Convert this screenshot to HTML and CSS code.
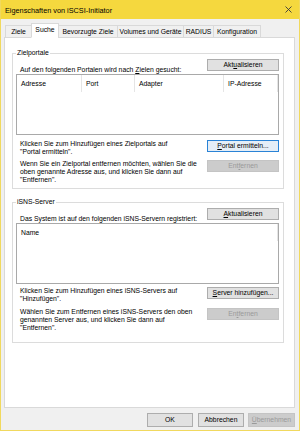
FILE: index.html
```html
<!DOCTYPE html>
<html lang="de">
<head>
<meta charset="utf-8">
<title>Eigenschaften von iSCSI-Initiator</title>
<link rel="stylesheet" href="styles.css">
</head>
<body>
<div class="window">
  <div class="titlebar">
    <span class="title">Eigenschaften von iSCSI-Initiator</span>
    <svg class="close" width="7" height="7" viewBox="0 0 7 7"><path d="M0.5 0.5 L6.5 6.5 M6.5 0.5 L0.5 6.5" stroke="#3a3a3a" stroke-width="0.9" fill="none"/></svg>
  </div>
  <div class="content">
    <div class="tabs">
      <div class="tab-gap"></div>
      <div class="tab t-ziele">Ziele</div>
      <div class="tab tab-active t-suche">Suche</div>
      <div class="tab t-bev">Bevorzugte Ziele</div>
      <div class="tab t-vol">Volumes und Geräte</div>
      <div class="tab t-rad">RADIUS</div>
      <div class="tab t-konf">Konfiguration</div>
      <div class="tab-fill"></div>
    </div>
    <div class="panel">
      <div class="group">
        <div class="group-label">Zielportale</div>
        <div class="row-head">
          <span class="text">Auf den folgenden Portalen wird nach <u>Z</u>ielen gesucht:</span>
          <div class="btn">Akt<u>u</u>alisieren</div>
        </div>
        <div class="list">
          <div class="list-head">
            <div class="col c-adr">Adresse</div>
            <div class="col c-port">Port</div>
            <div class="col c-adapter">Adapter</div>
            <div class="col c-ip">IP-Adresse</div>
          </div>
        </div>
        <div class="row row-b1">
          <div class="text">Klicken Sie zum Hinzufügen eines Zielportals auf<br>"Portal ermitteln".</div>
          <div class="btn btn-default"><u>P</u>ortal ermitteln...</div>
        </div>
        <div class="row row-c1">
          <div class="text">Wenn Sie ein Zielportal entfernen möchten, wählen Sie die<br>oben genannte Adresse aus, und klicken Sie dann auf<br>"Entfernen".</div>
          <div class="btn btn-disabled">Ent<u>f</u>ernen</div>
        </div>
      </div>
      <div class="group group-isns">
        <div class="group-label">iSNS-Server</div>
        <div class="row-head">
          <span class="text">Das System ist auf den folgenden iSNS-Servern registriert:</span>
          <div class="btn"><u>A</u>ktualisieren</div>
        </div>
        <div class="list">
          <div class="list-head">
            <div class="col c-name">Name</div>
          </div>
        </div>
        <div class="row row-b2">
          <div class="text">Klicken Sie zum Hinzufügen eines iSNS-Servers auf<br>"Hinzufügen".</div>
          <div class="btn"><u>S</u>erver hinzufügen...</div>
        </div>
        <div class="row row-c2">
          <div class="text">Wählen Sie zum Entfernen eines iSNS-Servers den oben<br>genannten Server aus, und klicken Sie dann auf<br>"Entfernen".</div>
          <div class="btn btn-disabled">En<u>t</u>fernen</div>
        </div>
      </div>
    </div>
    <div class="footer">
      <div class="btn fbtn f-ok">OK</div>
      <div class="btn fbtn f-cancel">Abbrechen</div>
      <div class="btn fbtn btn-disabled f-apply"><u>Ü</u>bernehmen</div>
    </div>
  </div>
</div>
</body>
</html>
```

FILE: styles.css
```css
html, body {
  margin: 0;
  padding: 0;
  background: #f0f0f0;
}

body {
  font-family: "Liberation Sans", Arial, sans-serif;
  font-size: 6.8px;
  line-height: 8px;
  color: #000;
}

.window {
  width: 300px;
  height: 431px;
  box-sizing: border-box;
  border: 1px solid #f1d95e;
  border-top: none;
  display: flex;
  flex-direction: column;
  background: #f0f0f0;
}

.titlebar {
  height: 19px;
  flex: none;
  background: #f5d83e;
  display: flex;
  align-items: center;
  justify-content: space-between;
  padding-left: 4px;
  padding-right: 7px;
}

.title {
  font-size: 7.3px;
  line-height: 9px;
  margin-top: 1px;
}

.close {
  display: block;
  margin-top: -1px;
}

.content {
  flex: 1;
  display: flex;
  flex-direction: column;
  padding: 4px 4px 0 3px;
  min-height: 0;
}

.tabs {
  display: flex;
  align-items: flex-end;
  height: 15px;
  flex: none;
}

.tab-gap {
  width: 1px;
  height: 1px;
  background: #d9d9d9;
}

.tab-fill {
  flex: 1;
  height: 1px;
  background: #d9d9d9;
  margin-left: -1px;
}

.tab {
  box-sizing: border-box;
  height: 13px;
  border: 1px solid #d9d9d9;
  background: #f0f0f0;
  line-height: 11px;
  text-align: center;
  white-space: nowrap;
  margin-left: -1px;
}

.t-ziele { width: 27px; margin-left: 0; }
.t-suche { width: 28px; }
.t-bev { width: 60px; }
.t-vol { width: 67px; }
.t-rad { width: 31px; }
.t-konf { width: 48px; }

.tab-active {
  height: 15px;
  background: #fff;
  border-bottom-color: #fff;
  line-height: 12px;
}

.panel {
  flex: 1;
  background: #fff;
  border: 1px solid #d9d9d9;
  border-top: none;
  padding: 15px 10px 0 7px;
  min-height: 0;
}

.group {
  border: 1px solid #dcdcdc;
  padding: 5px 4px 4px 3px;
}

.group-isns {
  margin-top: 13px;
  padding-bottom: 10px;
}

.group-label {
  width: fit-content;
  height: 8px;
  line-height: 8px;
  margin: -10px 0 2px 0;
  padding: 0 1px;
  background: #fff;
}

.row-head {
  display: flex;
  justify-content: space-between;
  align-items: flex-start;
  height: 15px;
}

.row-head .text {
  align-self: flex-end;
}

.text {
  margin-left: 4px;
  white-space: nowrap;
}

.row {
  display: flex;
  justify-content: space-between;
  align-items: flex-start;
}

.row-b1 { margin-top: 5px; }
.row-c1 { margin-top: 4px; }
.row-b2 { margin-top: 3px; }
.row-c2 { margin-top: 5px; }

.list {
  box-sizing: border-box;
  height: 61px;
  border: 1px solid #a9a9a9;
  background: #fff;
}

.list-head {
  display: flex;
  height: 17px;
}

.col {
  box-sizing: border-box;
  height: 17px;
  border-right: 1px solid #e5e5e5;
  padding: 5px 0 0 4px;
  line-height: 8px;
  white-space: nowrap;
}

.c-adr { width: 65px; }
.c-port { width: 53px; }
.c-adapter { width: 89px; }
.c-ip { width: 54px; }
.c-name { width: 261px; }

.btn {
  box-sizing: border-box;
  flex: none;
  width: 72px;
  height: 12px;
  border: 1px solid #adadad;
  background: #e1e1e1;
  line-height: 10px;
  text-align: center;
  white-space: nowrap;
}

.btn-default {
  border-color: #2a83d6;
  background: #e5eef7;
}

.btn-disabled {
  background: #cccccc;
  border-color: #c4c4c4;
  color: #9a9a9a;
}

.footer {
  flex: none;
  display: flex;
  justify-content: flex-end;
  padding: 5px 0 3px 0;
}

.fbtn {
  height: 14px;
  line-height: 12px;
}

.f-ok { width: 46px; margin-right: 5px; }
.f-cancel { width: 46px; margin-right: 4px; }
.f-apply { width: 47px; }

u {
  text-decoration-thickness: 0.5px;
  text-underline-offset: 1px;
}
```
